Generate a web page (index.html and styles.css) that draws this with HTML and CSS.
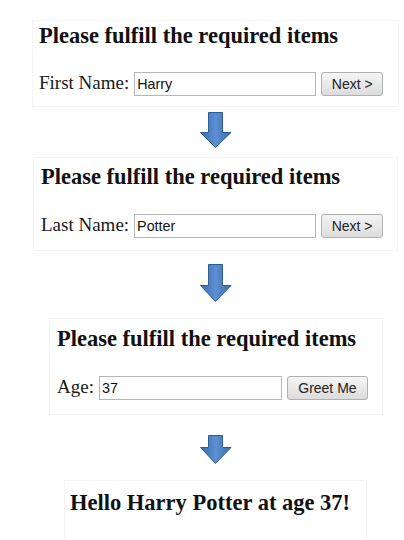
FILE: index.html
```html
<!DOCTYPE html>
<html>
<head>
<meta charset="utf-8">
<link rel="stylesheet" href="styles.css">
</head>
<body>
<div class="flow">
  <div class="card card-1">
    <h2 class="title">Please fulfill the required items</h2>
    <div class="row">
      <label class="label">First Name:</label>
      <input class="field field-name" type="text" value="Harry">
      <button class="btn btn-next">Next &gt;</button>
    </div>
  </div>
  <svg class="arrow arrow-1" width="32" height="36" viewBox="0 0 32 36">
    <defs>
      <linearGradient id="g1" x1="0" y1="0" x2="1" y2="0">
        <stop offset="0" stop-color="#3a6cab"/>
        <stop offset="0.5" stop-color="#5c90d2"/>
        <stop offset="1" stop-color="#3a6cab"/>
      </linearGradient>
    </defs>
    <polygon points="8.5,0.5 22.5,0.5 22.5,20.5 31,20.5 15.5,35.5 0.5,20.5 8.5,20.5" fill="url(#g1)" stroke="#2f5d94" stroke-width="1"/>
  </svg>
  <div class="card card-2">
    <h2 class="title">Please fulfill the required items</h2>
    <div class="row">
      <label class="label">Last Name:</label>
      <input class="field field-name" type="text" value="Potter">
      <button class="btn btn-next">Next &gt;</button>
    </div>
  </div>
  <svg class="arrow arrow-2" width="32" height="38" viewBox="0 0 32 38">
    <defs>
      <linearGradient id="g2" x1="0" y1="0" x2="1" y2="0">
        <stop offset="0" stop-color="#3a6cab"/>
        <stop offset="0.5" stop-color="#5c90d2"/>
        <stop offset="1" stop-color="#3a6cab"/>
      </linearGradient>
    </defs>
    <polygon points="8.5,0.5 22.5,0.5 22.5,21.5 31,21.5 15.5,37.5 0.5,21.5 8.5,21.5" fill="url(#g2)" stroke="#2f5d94" stroke-width="1"/>
  </svg>
  <div class="card card-3">
    <h2 class="title">Please fulfill the required items</h2>
    <div class="row">
      <label class="label">Age:</label>
      <input class="field field-age" type="text" value="37">
      <button class="btn btn-greet">Greet Me</button>
    </div>
  </div>
  <svg class="arrow arrow-3" width="32" height="29" viewBox="0 0 32 29">
    <defs>
      <linearGradient id="g3" x1="0" y1="0" x2="1" y2="0">
        <stop offset="0" stop-color="#3a6cab"/>
        <stop offset="0.5" stop-color="#5c90d2"/>
        <stop offset="1" stop-color="#3a6cab"/>
      </linearGradient>
    </defs>
    <polygon points="8.5,0.5 22.5,0.5 22.5,12.5 31,12.5 15.5,28.5 0.5,12.5 8.5,12.5" fill="url(#g3)" stroke="#2f5d94" stroke-width="1"/>
  </svg>
  <div class="card card-4">
    <h2 class="title">Hello Harry Potter at age 37!</h2>
  </div>
</div>
</body>
</html>
```
FILE: styles.css
```css
html, body {
  margin: 0;
  padding: 0;
  background: #ffffff;
  overflow: hidden;
}

.flow {
  width: 404px;
  box-sizing: border-box;
  padding-left: 27px;
  padding-top: 20px;
  display: flex;
  flex-direction: column;
  align-items: center;
}

.card {
  box-sizing: border-box;
  background: #ffffff;
  border: 1px solid #f4f4f4;
}

.card-1 { width: 367px; padding: 1.5px 6px 10.5px 6px; }
.card-2 { width: 365px; padding: 6.4px 8px 12px 7px; }
.card-3 { width: 334px; padding: 6.4px 7.5px 14px 7.5px; }
.card-4 { width: 303px; padding: 8.4px 5px 40px 5px; }

.title {
  margin: 0;
  font-family: "Liberation Serif", "Times New Roman", serif;
  font-weight: bold;
  font-size: 22.5px;
  line-height: 26px;
  color: #111111;
  white-space: nowrap;
}

.row {
  display: flex;
  align-items: baseline;
  gap: 5px;
  margin-top: 23px;
}

.card-2 .row { margin-top: 24px; }
.card-3 .row { margin-top: 24.5px; }

.label {
  font-family: "Liberation Serif", "Times New Roman", serif;
  font-size: 19px;
  color: #1a1a1a;
  white-space: nowrap;
}

.field {
  box-sizing: border-box;
  height: 24px;
  margin: 0;
  padding: 0 2px;
  border: 1px solid #b4b6ba;
  font-family: "Liberation Sans", Arial, sans-serif;
  font-size: 14.3px;
  color: #111111;
  background: #ffffff;
  outline: none;
}

.field-name { width: 182px; }
.field-age { width: 183px; }

.btn {
  box-sizing: border-box;
  height: 24px;
  margin: 0;
  padding: 0;
  border: 1px solid #b0b0b0;
  border-radius: 3px;
  background: linear-gradient(#f5f5f5, #dcdcdc);
  font-family: "Liberation Sans", Arial, sans-serif;
  font-size: 14px;
  color: #222222;
}

.btn-next { width: 62px; }
.btn-greet { width: 81px; }

.arrow { display: block; }
.arrow-1 { margin: 5px 0 9px 0; }
.arrow-2 { margin: 13px 0 16px 0; }
.arrow-3 { margin: 20px 0 16px 0; }
```
